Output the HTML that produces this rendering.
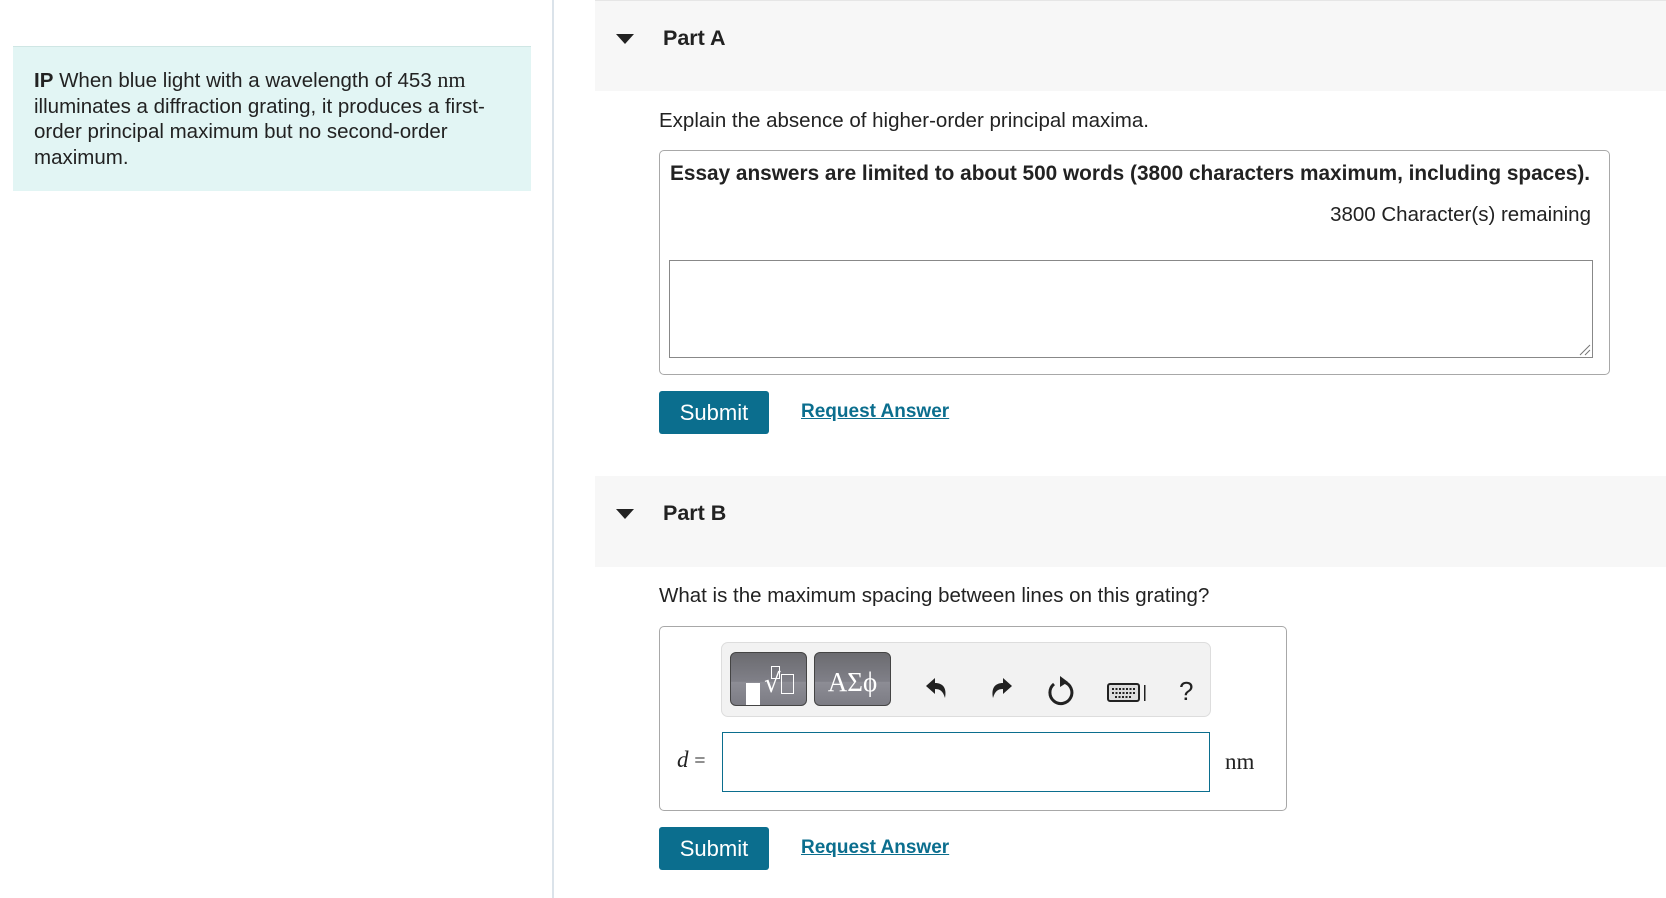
<!DOCTYPE html>
<html><head><meta charset="utf-8"><style>
*{box-sizing:border-box;margin:0;padding:0}
body{width:1666px;height:898px;background:#fff;font-family:"Liberation Sans",Arial,sans-serif;color:#222;position:relative;overflow:hidden}
.abs{position:absolute}
.intro{left:13px;top:46px;width:518px;height:145px;background:#e2f5f4;border-top:1px solid #cfe6e4;padding:20px 21px;font-size:20.5px;line-height:25.5px;color:#222}
.intro div{width:468px}
.serif{font-family:"Liberation Serif",serif;font-size:22px}
.divider{left:552px;top:0;width:2px;height:898px;background:#dbe3ea}
.hdr{left:595px;width:1071px;height:91px;background:#f7f7f7}
.tri{width:0;height:0;border-left:9px solid transparent;border-right:9px solid transparent;border-top:10px solid #222}
.ptitle{font-weight:bold;font-size:21.5px}
.q{font-size:20.5px}
.btn{background:#0b6e8e;color:#fff;font-size:22px;border-radius:3px;width:110px;height:43px;display:flex;align-items:center;justify-content:center}
.link{color:#0b6e8e;font-weight:bold;text-decoration:underline;font-size:19px}
</style></head><body>
<div class="abs intro"><div><b>IP</b> When blue light with a wavelength of 453 <span class="serif">nm</span> illuminates a diffraction grating, it produces a first-order principal maximum but no second-order maximum.</div></div>
<div class="abs divider"></div>

<div class="abs hdr" style="top:0;border-top:1px solid #e6e6e6"></div>
<div class="abs tri" style="left:616px;top:34px"></div>
<div class="abs ptitle" style="left:663px;top:26px">Part A</div>
<div class="abs q" style="left:659px;top:109px">Explain the absence of higher-order principal maxima.</div>
<div class="abs" style="left:659px;top:150px;width:951px;height:225px;border:1px solid #a8a8a8;border-radius:5px"></div>
<div class="abs" style="left:670px;top:162px;font-weight:bold;font-size:20.8px">Essay answers are limited to about 500 words (3800 characters maximum, including spaces).</div>
<div class="abs" style="right:75px;top:203px;font-size:20.5px">3800 Character(s) remaining</div>
<div class="abs" style="left:669px;top:260px;width:924px;height:98px;border:1px solid #888"></div>
<svg class="abs" style="left:1578px;top:343px" width="13" height="13"><path d="M2 12L12 2M7 12L12 7" stroke="#777" stroke-width="1"/></svg>
<div class="abs btn" style="left:659px;top:391px">Submit</div>
<div class="abs link" style="left:801px;top:401px">Request Answer</div>

<div class="abs hdr" style="top:476px"></div>
<div class="abs tri" style="left:616px;top:509px"></div>
<div class="abs ptitle" style="left:663px;top:501px">Part B</div>
<div class="abs q" style="left:659px;top:584px">What is the maximum spacing between lines on this grating?</div>
<div class="abs" style="left:659px;top:626px;width:628px;height:185px;border:1px solid #a8a8a8;border-radius:5px"></div>
<div class="abs" style="left:721px;top:642px;width:490px;height:75px;background:#f2f2f2;border:1px solid #ddd;border-radius:7px"></div>
<div class="abs" style="left:730px;top:652px;width:77px;height:54px;border-radius:6px;background:linear-gradient(#6b6b70,#808088 55%,#8d8d95 56%,#7c7c84);border:1px solid #444"></div>
<div class="abs" style="left:746px;top:683px;width:14px;height:22px;background:#fff"></div>
<div class="abs" style="left:764px;top:664px;color:#fff;font-family:'DejaVu Sans',sans-serif;font-size:26px;line-height:40px">√<span style="display:inline-block;width:13px;height:20px;border:1.5px solid #fff;vertical-align:-2px"></span></div>
<div class="abs" style="left:771px;top:666px;width:9px;height:13px;border:1.5px solid #fff"></div>
<div class="abs" style="left:814px;top:652px;width:77px;height:54px;border-radius:6px;background:linear-gradient(#6b6b70,#808088 55%,#8d8d95 56%,#7c7c84);border:1px solid #444;color:#fff;font-family:'Liberation Serif',serif;font-size:27px;display:flex;align-items:center;justify-content:center;padding-top:6px">ΑΣϕ</div>
<svg class="abs" style="left:924px;top:676px" width="26" height="26" viewBox="0 0 26 26"><path d="M2 10L11 2V7C19 7 23 12 21 22C19 15 16 13 11 13V18Z" fill="#222"/></svg>
<svg class="abs" style="left:988px;top:676px" width="26" height="26" viewBox="0 0 26 26"><path d="M24 10L15 2V7C7 7 3 12 5 22C7 15 10 13 15 13V18Z" fill="#222"/></svg>
<svg class="abs" style="left:1046px;top:674px" width="30" height="32" viewBox="0 0 30 32"><path d="M18 8A11 11 0 1 1 8 10" fill="none" stroke="#222" stroke-width="3"/><path d="M14 2L22 8L14 13Z" fill="#222"/></svg>
<svg class="abs" style="left:1107px;top:682px" width="40" height="22" viewBox="0 0 40 22"><rect x="1" y="2" width="31" height="17" rx="2" fill="#ddd" stroke="#222" stroke-width="2"/><path d="M5 7h24M5 11h24M8 15h17" stroke="#222" stroke-width="2" stroke-dasharray="2 1.5"/><rect x="37" y="3" width="1.5" height="16" fill="#222"/></svg>
<div class="abs" style="left:1179px;top:676px;font-size:26px;color:#222">?</div>
<div class="abs" style="left:677px;top:747px;font-family:'Liberation Serif',serif;font-size:23px"><i>d</i> <span style="font-size:20px">=</span></div>
<div class="abs" style="left:722px;top:732px;width:488px;height:60px;border:1.5px solid #0b6e8e"></div>
<div class="abs" style="left:1225px;top:749px;font-family:'Liberation Serif',serif;font-size:23px">nm</div>
<div class="abs btn" style="left:659px;top:827px">Submit</div>
<div class="abs link" style="left:801px;top:837px">Request Answer</div>
</body></html>
